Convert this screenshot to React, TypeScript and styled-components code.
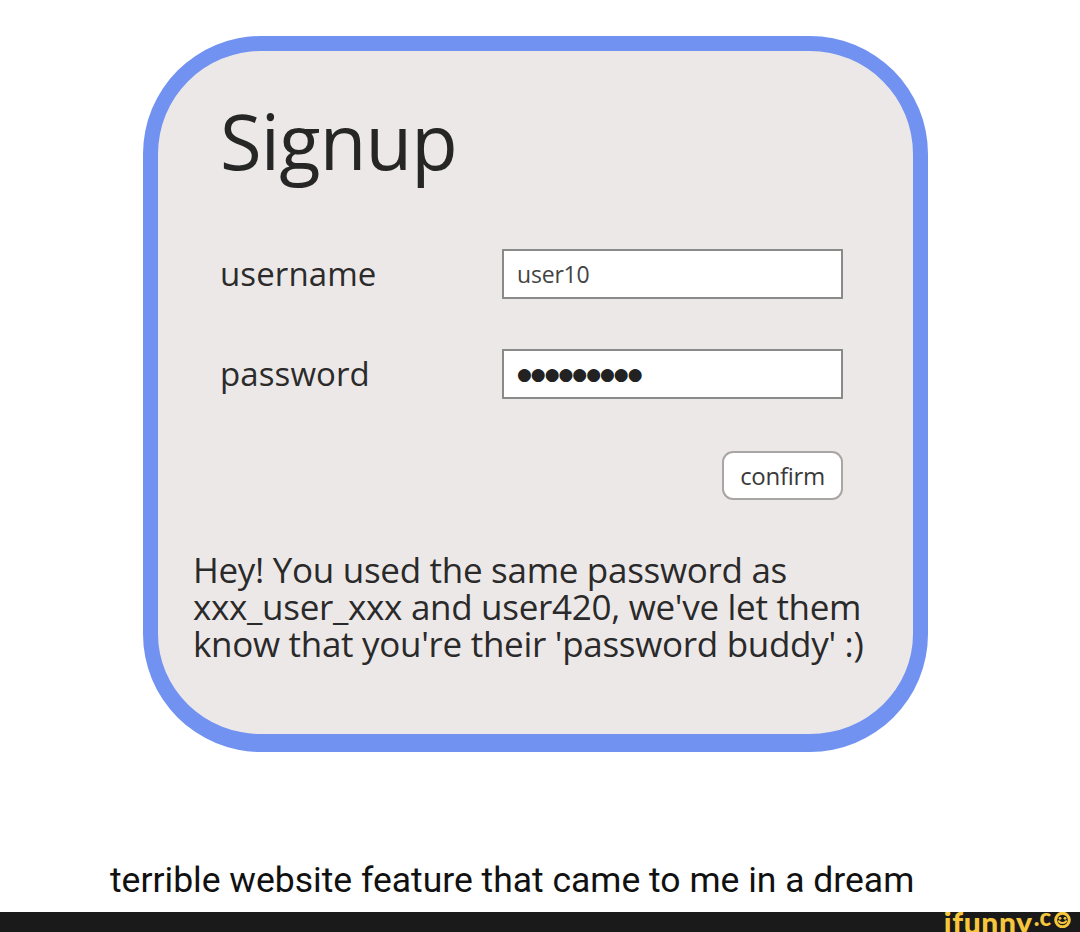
import React from "react";
import styled, { createGlobalStyle } from "styled-components";

const Global = createGlobalStyle`
  html, body { margin: 0; padding: 0; background: #ffffff; }
  body { font-family: "Open Sans", "Noto Sans", sans-serif; }
  * { box-sizing: border-box; }
`;

const Page = styled.div`
  width: 1080px;
  height: 932px;
  display: flex;
  flex-direction: column;
  overflow: hidden;
`;

const Stage = styled.main`
  flex: 1;
  display: flex;
  flex-direction: column;
  padding: 36px 0 0 143px;
`;

const Card = styled.section`
  width: 785px;
  height: 716px;
  border: 15px solid #7192f1;
  border-bottom-width: 18px;
  border-radius: 118px;
  background: #ede8e8;
  display: flex;
  flex-direction: column;
  padding: 46px 40px 0 35px;
  color: #2b2b2b;
`;

const Title = styled.h1`
  margin: 0 0 0 27px;
  font-family: "Open Sans", sans-serif;
  font-weight: 400;
  font-size: 76px;
  line-height: 88px;
  letter-spacing: -0.8px;
  color: #262626;
`;

const Form = styled.div`
  display: flex;
  flex-direction: column;
  gap: 50px;
  margin: 64px 0 0 27px;
`;

const Row = styled.div`
  display: flex;
  align-items: center;
  height: 50px;
`;

const Label = styled.span`
  width: 282px;
  font-size: 33px;
  line-height: 40px;
  letter-spacing: 0.1px;
  color: #2b2b2b;
`;

const Field = styled.div<{ $dots?: boolean }>`
  width: 341px;
  height: 50px;
  background: #ffffff;
  border: 2px solid #8a8a8a;
  display: flex;
  align-items: center;
  padding-left: 13px;
  font-size: ${(p) => (p.$dots ? "17px" : "23px")};
  letter-spacing: ${(p) => (p.$dots ? "-1px" : "-0.2px")};
  color: ${(p) => (p.$dots ? "#222" : "#444")};
  font-family: ${(p) => (p.$dots ? '"DejaVu Sans", sans-serif' : '"Open Sans", sans-serif')};
`;

const Actions = styled.div`
  display: flex;
  justify-content: flex-end;
  width: 650px;
  margin: 52px 0 0 0;
`;

const Confirm = styled.button`
  width: 121px;
  height: 49px;
  border: 2px solid #a9a5a5;
  border-radius: 11px;
  background: #ffffff;
  font-family: "Open Sans", sans-serif;
  font-size: 24px;
  letter-spacing: -0.3px;
  color: #3a3a3a;
  padding: 0;
`;

const Message = styled.p`
  margin: 51px 0 0 0;
  font-size: 35px;
  line-height: 37px;
  letter-spacing: -0.3px;
  color: #2a2a2a;
  white-space: nowrap;
`;

const Line = styled.span`
  display: block;
`;

const Caption = styled.p`
  margin: 108px 0 0 -33px;
  font-family: "Roboto", sans-serif;
  font-size: 35.5px;
  letter-spacing: 0;
  color: #111;
  line-height: 40px;
  white-space: nowrap;
`;

const Bar = styled.footer`
  height: 20px;
  background: #1b1a1a;
  display: flex;
  justify-content: flex-end;
  align-items: flex-start;
  padding-right: 7px;
  overflow: hidden;
`;

const Logo = styled.span`
  display: flex;
  align-items: flex-start;
  height: 20px;
  color: #f6c63c;
  font-family: "Lato", "Noto Sans", sans-serif;
  font-weight: 900;
`;

const LogoWord = styled.span`
  font-size: 30px;
  line-height: 20px;
  letter-spacing: 0.6px;
  margin-top: 0px;
`;

const LogoSmall = styled.span`
  font-size: 24px;
  line-height: 20px;
  margin-top: -5px;
  margin-left: 1px;
`;

const SmileyBox = styled.span`
  display: flex;
  margin-top: 0px;
  margin-left: 1px;
`;

function Smiley() {
  return (
    <svg width="21" height="16" viewBox="0 0 21 16">
      <circle cx="10.5" cy="8" r="6.8" fill="none" stroke="#f6c63c" strokeWidth="3" />
      <circle cx="8" cy="6.3" r="1.4" fill="#f6c63c" />
      <circle cx="13" cy="6.3" r="1.4" fill="#f6c63c" />
      <path d="M6.8 9.2 Q10.5 13 14.2 9.2" fill="none" stroke="#f6c63c" strokeWidth="2" strokeLinecap="round" />
    </svg>
  );
}

export default function App() {
  return (
    <Page>
      <Global />
      <Stage>
        <Card>
          <Title>Signup</Title>
          <Form>
            <Row>
              <Label>username</Label>
              <Field>user10</Field>
            </Row>
            <Row>
              <Label>password</Label>
              <Field $dots>●●●●●●●●●</Field>
            </Row>
          </Form>
          <Actions>
            <Confirm>confirm</Confirm>
          </Actions>
          <Message>
            <Line>Hey! You used the same password as</Line>
            <Line>xxx_user_xxx and user420, we've let them</Line>
            <Line>know that you're their 'password buddy' :)</Line>
          </Message>
        </Card>
        <Caption>terrible website feature that came to me in a dream</Caption>
      </Stage>
      <Bar>
        <Logo>
          <LogoWord>ifunny</LogoWord>
          <LogoSmall>.c</LogoSmall>
          <SmileyBox>
            <Smiley />
          </SmileyBox>
        </Logo>
      </Bar>
    </Page>
  );
}
